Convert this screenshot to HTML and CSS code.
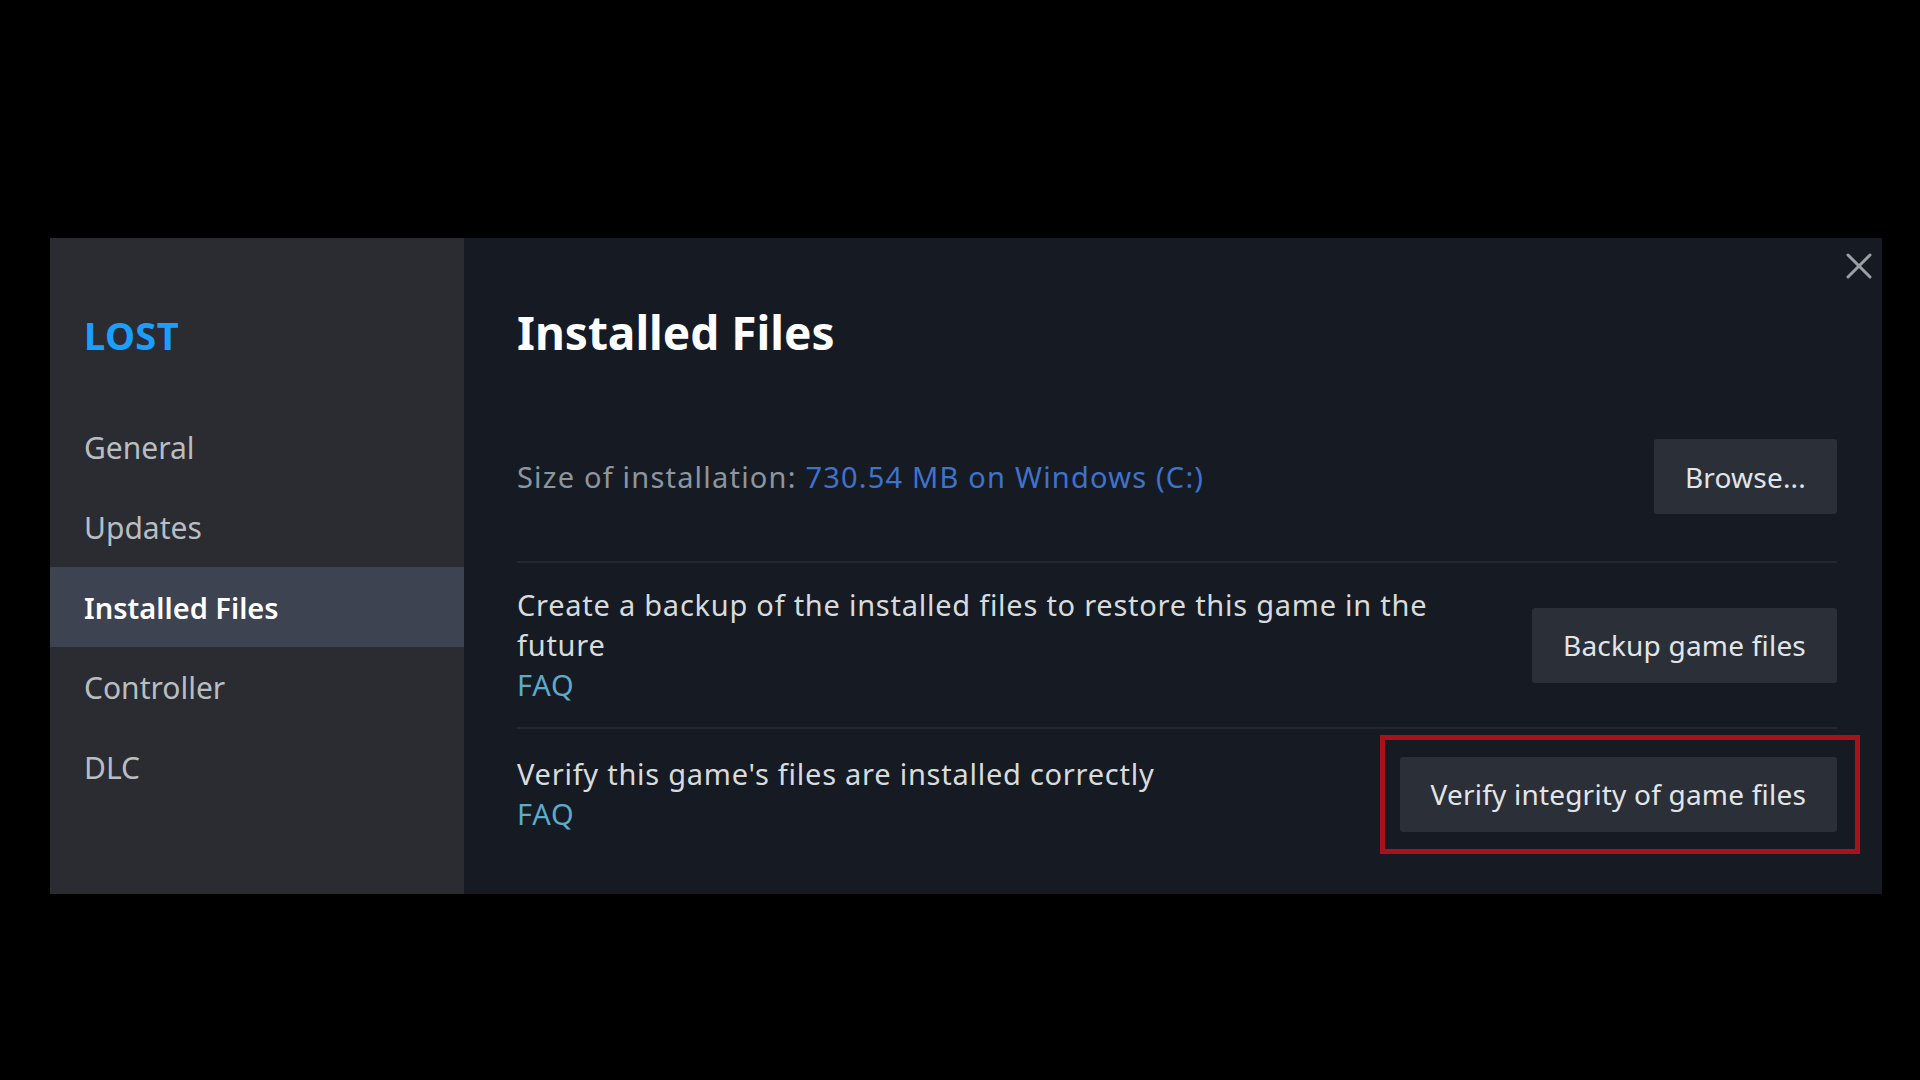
FILE: index.html
```html
<!DOCTYPE html>
<html lang="en">
<head>
<meta charset="utf-8">
<title>LOST - Properties</title>
<link rel="stylesheet" href="styles.css">
</head>
<body>
<div class="stage">
  <div class="modal">
    <aside class="sidebar">
      <div class="game-title">LOST</div>
      <nav class="nav">
        <div class="nav-item">General</div>
        <div class="nav-item">Updates</div>
        <div class="nav-item active">Installed Files</div>
        <div class="nav-item">Controller</div>
        <div class="nav-item">DLC</div>
      </nav>
    </aside>
    <main class="content">
      <button class="close" aria-label="Close">
        <svg viewBox="0 0 26 26" width="26" height="26"><path d="M2 2 L24 24 M24 2 L2 24" stroke="#9ba0a6" stroke-width="3" stroke-linecap="round" fill="none"/></svg>
      </button>
      <h1 class="heading">Installed Files</h1>
      <section class="row row-size">
        <div class="row-text size-text">
          <span class="label">Size of installation:</span> <span class="value">730.54 MB on Windows (C:)</span>
        </div>
        <button class="btn">Browse...</button>
      </section>
      <section class="row row-backup">
        <div class="row-text desc">
          <div>Create a backup of the installed files to restore this game in the future</div>
          <a class="faq">FAQ</a>
        </div>
        <button class="btn">Backup game files</button>
      </section>
      <section class="row row-verify">
        <div class="row-text desc">
          <div>Verify this game's files are installed correctly</div>
          <a class="faq">FAQ</a>
        </div>
        <div class="highlight-wrap">
          <button class="btn">Verify integrity of game files</button>
          <div class="highlight"></div>
        </div>
      </section>
    </main>
  </div>
</div>
</body>
</html>
```

FILE: styles.css
```css
* { box-sizing: border-box; }
html, body {
  margin: 0;
  padding: 0;
  background: #000;
  width: 1920px;
  height: 1080px;
  overflow: hidden;
  font-family: "Noto Sans", "Open Sans", sans-serif;
}
.stage {
  padding: 238px 0 0 50px;
}
.modal {
  display: flex;
  width: 1832px;
  height: 656px;
  background: #161b23;
  position: relative;
}
.sidebar {
  width: 414px;
  flex: none;
  background: #2a2c31;
  padding-top: 74px;
}
.game-title {
  padding-left: 34px;
  font-size: 38px;
  line-height: 46px;
  font-weight: 700;
  color: #1a9fff;
  letter-spacing: 0.4px;
  margin-bottom: 49px;
}
.nav-item {
  height: 80px;
  display: flex;
  align-items: center;
  padding-left: 34px;
  font-size: 30px;
  color: #b9bdc2;
}
.nav-item.active {
  background: #3d4350;
  color: #ffffff;
  font-weight: 600;
  font-size: 29px;
}
.content {
  flex: 1;
  padding: 67px 45px 0 53px;
}
.close {
  position: absolute;
  top: 14px;
  right: 9px;
  width: 28px;
  height: 28px;
  padding: 1px;
  border: 0;
  background: none;
}
.heading {
  margin: 0;
  font-size: 46px;
  line-height: 54px;
  font-weight: 700;
  color: #ffffff;
}
.row {
  display: flex;
  align-items: center;
  justify-content: space-between;
  border-bottom: 2px solid #232830;
}
.row:last-child { border-bottom: 0; }
.row-size {
  height: 204px;
  padding-top: 80px;
  align-items: flex-start;
}
.row-size .row-text {
  padding-top: 18px;
}
.row-backup {
  height: 166px;
}
.row-verify {
  height: 130px;
}
.row-text {
  font-size: 29px;
  line-height: 40px;
  letter-spacing: 0.75px;
  color: #d8dbde;
}
.size-text { letter-spacing: 1.2px; }
.desc { max-width: 950px; }
.label { color: #8e959d; }
.value { color: #3f72cc; }
.faq {
  display: block;
  color: #5cabc9;
}
.btn {
  flex: none;
  height: 75px;
  padding: 0 31px;
  border: 0;
  border-radius: 3px;
  background: #2b2f37;
  color: #e2e5e8;
  font-family: "Noto Sans", "Open Sans", sans-serif;
  font-size: 28px;
  letter-spacing: 0.2px;
}
.highlight-wrap {
  position: relative;
}
.highlight {
  position: absolute;
  top: -22px;
  bottom: -22px;
  left: -20px;
  right: -23px;
  border: 5px solid #a8121c;
  pointer-events: none;
}
```
